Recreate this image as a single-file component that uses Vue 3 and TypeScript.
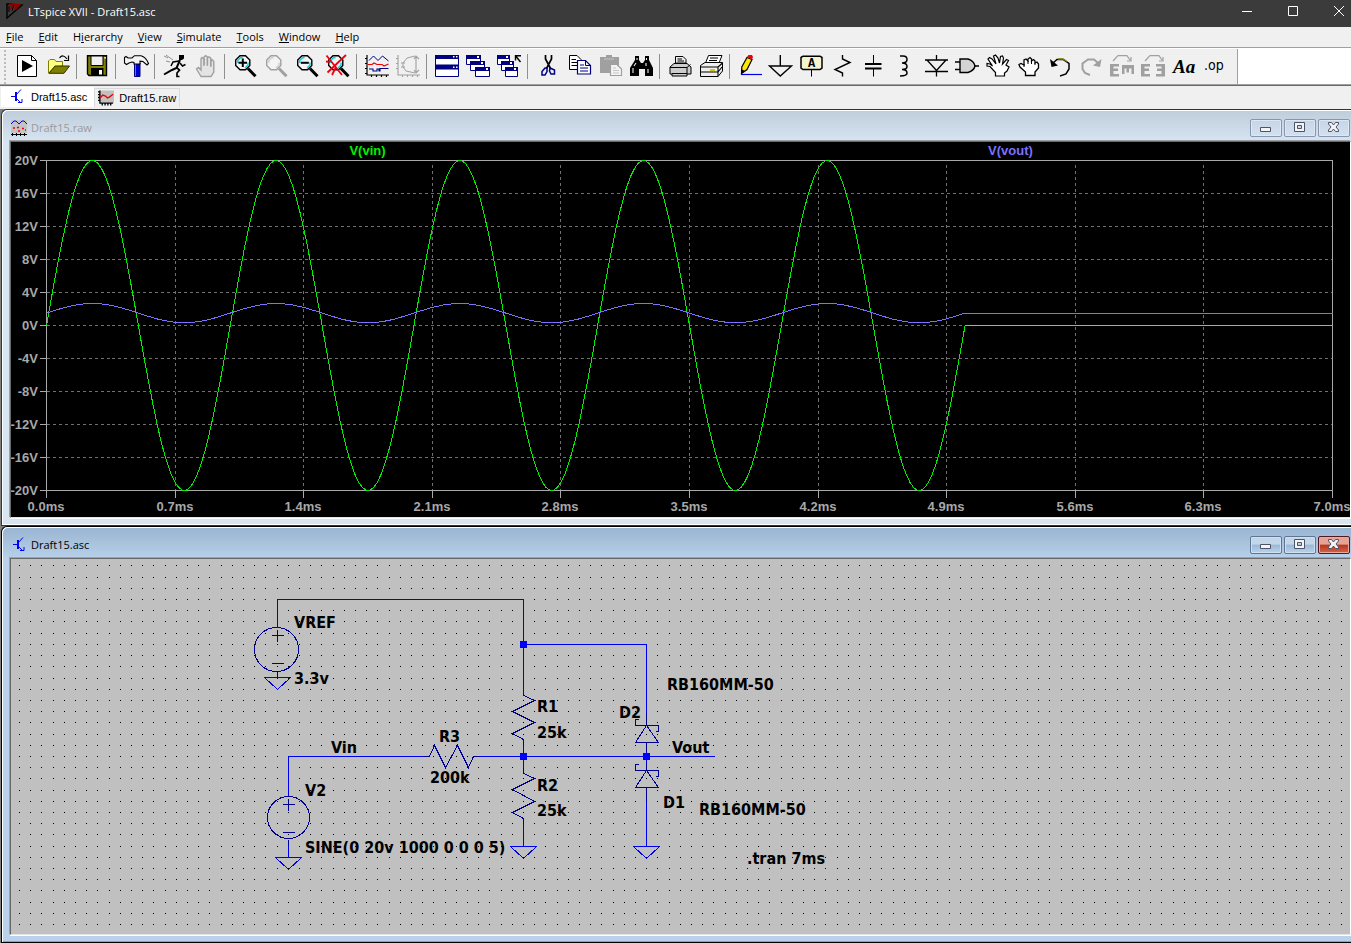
<script setup lang="ts">
import { computed, onBeforeUnmount, onMounted, ref } from 'vue'

interface Shape {
  d: string
  fill?: string
  stroke?: string
  w?: number
}
interface Tool {
  label: string
  shapes: Shape[]
  text?: { value: string; x: number; y: number; kind: string }
}

const K = '#000'
const G = '#a0a0a0'
const NAVY = '#000080'
const line = (d: string, stroke = K, w = 1): Shape => ({ d, stroke, w })
const area = (d: string, fill = K, stroke = 'none', w = 1): Shape => ({ d, fill, stroke, w })

const lens = (c: string, glass: string, mark: Shape[]): Shape[] => [
  area('M6 .8H11.5L15.8 5V10.5L11.5 14.8H6L1.7 10.5V5Z', '#f4f4f4', c, 1.4),
  line('M3.8 8V5.5L6.5 2.8H8.5M14 7.5V10L11 13', glass, 1.5),
  line('M14 13.5L21.5 21.3', c, 3),
  ...mark,
]
const miniWindow = (x: number, y: number, w: number, h: number): Shape[] => [
  area(`M${x + 0.5} ${y + 0.5}h${w - 1}v${h - 1}h${1 - w}z`, '#fff', NAVY),
  area(`M${x} ${y}h${w}v4h${-w}z`, NAVY),
  area(`M${x + w - 4} ${y + 1}h2v2h-2z`, '#fff'),
]

const groups: Tool[][] = [
  [
    {
      label: 'Run',
      shapes: [
        area('M1.5 .5H15.5L20.5 5.5V21.5H1.5Z', '#fff', K),
        line('M15.5 .5V5.5H20.5'),
        area('M6 5V17L17 11Z'),
      ],
    },
    {
      label: 'Open',
      shapes: [
        area('M1.5 18V6L3 4.5H7.5L9 6.5H15.5V11L8 12Z', '#ffff80', '#808000'),
        area('M2 18.3L8 11H22.5L17 18.3Z', '#808000', '#303000'),
        line('M12.5 3Q16-1.5 20 4M21.5 .5V5.5H17', K, 1.2),
      ],
    },
  ],
  [
    {
      label: 'Save',
      shapes: [
        area('M1.5 .8H20.5V20.5H3L1.5 19Z', '#808000', K, 1.4),
        area('M5 1H17V10.5H5Z', '#f0f0f0', K, 1),
        area('M5 13H17.5V20.5H5Z'),
        area('M13 15H16V19.5H13Z', '#fff'),
        area('M18.3 2H19.8V3.5H18.3Z', '#fff'),
      ],
    },
  ],
  [
    {
      label: 'Control Panel',
      shapes: [
        area('M9.5 8H15V21.5H9.5Z', '#0000d0', '#000080'),
        line('M10.5 9V21', '#4080ff', 1),
        area('M-.5 2.5L1 1.5L3 3H7L9.5 .7H16Q21 2 23.5 8.5L22 10L18 6.5L15 6.2V9H9V7.5L7 7L4 8L1.5 9.5L-.5 8Z', '#f4f4f4', K, 1.1),
      ],
    },
  ],
  [
    {
      label: 'Run simulation',
      shapes: [
        area('M15 0H20V3.5L18 5H15Z'),
        line('M16 5L12.5 13L8 15L0 19.5', K, 2),
        line('M15 6L9 7L7 11M16 8L18.5 11L21.5 9.5', K, 1.5),
        line('M12.5 12.5L15.5 15L13 18V21.5H15.5', K, 1.7),
        line('M0 1L4 3M2 0L9 5M2 6L6 7', '#909090'),
      ],
    },
    {
      label: 'Halt',
      shapes: [
        area(
          'M6 21.5L1.5 14L3.5 12.5L6 15V4L7 2.5L9 4V10V2L10.5 .7L12.5 2V10V3L14 1.8L15.8 3V11V6L17.2 4.8L18.8 6.5V17L16 21.5Z',
          '#e4e4e4', G, 1.4,
        ),
        line('M9 4V11M12.3 3V11M15.8 4V12', G, 1.2),
      ],
    },
  ],
  [
    { label: 'Zoom in', shapes: lens(K, '#00d8e8', [line('M8.8 3.5V12M4.5 7.8H13', K, 2)]) },
    { label: 'Pan', shapes: lens(G, '#d0d0d0', []) },
    { label: 'Zoom out', shapes: lens(K, '#00d8e8', [line('M4.8 7.8H12.8', K, 2)]) },
    {
      label: 'Zoom full extents',
      shapes: lens(K, '#00d8e8', [line('M-.5 .5L15 20M19 0L10 8.5L.5 17.5M-1 6.5L3 7M9 12L5 20', '#f00010', 1.8)]),
    },
  ],
  [
    {
      label: 'Autorange',
      shapes: [
        line('M1 0V20H23M-1 3.5H1M-1 8.5H1M-1 13.5H1M-1 18.5H1M5.5 20V22M10.5 20V22M15.5 20V22M20.5 20V22', K, 1.2),
        line('M3 5.5L7.5 1L12 5.5L16.5 1L22.5 6', NAVY),
        line('M2 9.5H6L8 8L11 9.5H16L18 11L22.5 9', '#f00000', 1.2),
        line('M3 14H7V16H11V14H13V16H14V13.5H22.5', NAVY, 1.1),
      ],
    },
    {
      label: 'FFT',
      shapes: [
        line('M1 0V20H23M-1 3.5H1M-1 8.5H1M-1 13.5H1M5.5 20V22M10.5 20V22M15.5 20V22M20.5 20V22M19 1V18M17 4L19 1L22 4M17 15L19 18L22 15', G, 1.1),
        line('M18 1L10 3L6 8V12L9 16L18 18M4 8H8M4 12H8', G),
      ],
    },
  ],
  [
    {
      label: 'Tile windows',
      shapes: [
        area('M-.5 .5H22.5V21.5H-.5Z', '#fff', NAVY),
        area('M-1 0H23V4H-1ZM-1 9.5H23V14.5H-1Z', NAVY),
        area('M17 1H18.5V2.5H17ZM20 1H21.5V2.5H20ZM17 11.5H18.5V13H17ZM20 11.5H21.5V13H20Z', '#fff'),
      ],
    },
    { label: 'Cascade windows', shapes: [...miniWindow(-1, 0, 15, 10), ...miniWindow(3, 6, 15, 10), ...miniWindow(8, 12, 15, 10)] },
    {
      label: 'Close all windows',
      shapes: [
        ...miniWindow(-1, 0, 13, 10),
        ...miniWindow(3, 6, 13, 10),
        ...miniWindow(7, 12, 13, 10),
        line('M17.5 5.5V.7H23M17.5 .7L22.5 7', K, 1.4),
      ],
    },
  ],
  [
    {
      label: 'Cut',
      shapes: [
        line('M8.5 0V4L13.5 13.5M14.5 0V4L9.5 13.5', K, 1.7),
        line('M8 13H10V16.5L8 20H5V16.5ZM13 13L17.5 15V19H14L12.5 16Z', NAVY, 1.5),
      ],
    },
    {
      label: 'Copy',
      shapes: [
        area('M1.5 .5H9L13 4.5V14.5H1.5Z', '#fff', K),
        line('M3.5 4.5H8M3.5 7.5H10M3.5 10.5H9'),
        area('M9.5 5.5H17.5L22.5 10.5V19H9.5Z', '#fff', NAVY, 1.2),
        line('M12 10H16M12 13H20M12 16H20M17.5 5.5V10.5H22.5', NAVY),
      ],
    },
    {
      label: 'Paste',
      shapes: [
        area('M1 2H7V0H13V2H20V18H1Z', G),
        area('M11.5 9.5H18L22.5 14V20.5H11.5Z', '#f4f4f4', G, 1.2),
        line('M14 13H17M14 15.5H20M14 18H20M5 4H15', '#c4c4c4'),
      ],
    },
    {
      label: 'Find',
      shapes: [
        area('M5 1H9V5L11 8H13L15 5V1H19V5L23 13V21H15V14H9V21H0V13L5 5Z'),
        line('M7 3V5M16.5 3V5M3 13V18M6 8L4 11M16 8V11M18 14V18', '#f0f0f0', 1.1),
      ],
    },
  ],
  [
    {
      label: 'Print',
      shapes: [
        area('M6.5 8V1.5H14L17 4.5V8Z', '#eee', K),
        area('M5 8.5H18L22 12V19H18V21H3V19H1V12Z', '#ccc', K),
        line('M1 12.5H18V19M18 12.5L21.5 9.5M3 18.5H18M8.5 4H13M8.5 6H15', K),
      ],
    },
    {
      label: 'Print setup',
      shapes: [
        area('M5.5 8L8.5 .5H22L19 8Z', '#fff', K),
        area('M.5 10.5L5 7.5H22.5V16L18 21.5H.5Z', '#eee', K),
        line('M.5 12H18V21.5M18 12L22.5 8M.5 17H18L22 12M10 3H18M9 5.5H17', K, 1.1),
        line('M10 15H15', '#d0c000', 1.8),
      ],
    },
  ],
  [
    {
      label: 'Wire',
      shapes: [
        area('M2.5 18.5L2.8 12L8 2.5L13 4.5L8 14.5Z', '#ffe800', K, 1.2),
        area('M8 2L9.5 0H13L14 2L13 4.5Z', '#f00000'),
        area('M2 19V14L6 16Z'),
        line('M2 19.5H23', '#0000f0', 1.2),
      ],
    },
    { label: 'Ground', shapes: [line('M10.3 0V11M-.5 11H21.5L10.3 21Z', K, 1.4)] },
    {
      label: 'Label net',
      shapes: [area('M0 2.5L2 1.2H19L21 2.5V13L19 14.5H2L0 13Z', '#f4f4d0', K, 1.5), line('M10.5 15V21.5')],
      text: { value: 'A', x: 7, y: 12, kind: 'net' },
    },
    { label: 'Resistor', shapes: [line('M10.5 0V4L18 7.5L3 14.5L10.5 18V21.5', K, 1.4)] },
    { label: 'Capacitor', shapes: [line('M10.5 0V8.5M10.5 14V21.5'), line('M2 9H18.5M2 13.5H18.5', K, 2)] },
    {
      label: 'Inductor',
      shapes: [line('M6 1H9Q13 1 13 4.5Q13 8 8 8Q13 8 13 11.5Q13 14.5 8 14.5Q13 14.5 13 18Q13 21 6 21', K, 1.5)],
    },
    { label: 'Diode', shapes: [line('M11.5 0V5M11.5 16.5V21.5M0 5H23M2 5L11.5 15.5L21 5M0 16.5H23', K, 1.3)] },
    {
      label: 'Component',
      shapes: [
        area('M4 4H12Q18 6 19 11Q18 15.5 12 17.5H4Z', '#d4d4d4', K, 1.4),
        line('M-1 7H4M-1 14.5H4M18 11H23', K, 1.6),
      ],
    },
    {
      label: 'Move',
      shapes: [
        area(
          'M8.5 21V17.5L3 11.5L0 11V8.5L3 9L5.5 11L1 4L2.5 2.5L5 4L9 9L6.5 1L8.5 0L11 3L12.5 8L13.5 1.5L15.5 1L16.5 3L15.5 9L19.5 4.5L21.5 5.5L19 10L22 12L20 16L17.5 18V21Z',
          '#fff', K, 1.2,
        ),
      ],
    },
    {
      label: 'Drag',
      shapes: [
        area(
          'M7.5 20.5V17L2 12L1 9.5L3 8.5L6 10V5L8 4L10 6V4L12 2.5L13.5 4V6L15.5 4.5L17 6V8L19 7L20.5 9V13L17 17V20.5Z',
          '#fff', K, 1.3,
        ),
        line('M6 9V12M10 6V9M13.5 6V9M17 8V10', K, 1),
      ],
    },
    { label: 'Undo', shapes: [line('M4 8L8 4.5H14L20 8.5V14L17 19L11 21', K, 1.5), line('M9 4H14L18 6.5', '#808000', 1.3), area('M1 4L2.5 12L9 10.5Z')] },
    { label: 'Redo', shapes: [line('M18 8L14 4.5H8L2.5 8.5V14L5 18L10 20', G, 2), area('M21.5 4L20 12L13 10.5Z', G)] },
    {
      label: 'Rotate',
      shapes: [
        area('M-1 9H8V11.5H2.5V13.5H7V16H2.5V19H8V21.5H-1ZM11 10H23V19H20.5V13.5H18V17.5H15.5V13.5H13.5V19H11Z', G),
        line('M2 6L7 .7H16L19 5M20 2V6H16', G, 1.2),
      ],
    },
    {
      label: 'Mirror',
      shapes: [
        area('M-1 9H8V11.5H2.5V13.5H7V16H2.5V19H8V21.5H-1ZM23 9H14V11.5H19.5V13.5H15V16H19.5V19H14V21.5H23Z', G),
        line('M3 6L8 .7H17L20 5M21 2V6H17', G, 1.2),
      ],
    },
    { label: 'Comment', shapes: [], text: { value: 'Aa', x: 0, y: 18, kind: 'comment' } },
    { label: 'SPICE directive', shapes: [], text: { value: '.op', x: 0, y: 15, kind: 'directive' } },
  ],
]

const menus = [
  ['', 'F', 'ile'],
  ['', 'E', 'dit'],
  ['H', 'i', 'erarchy'],
  ['', 'V', 'iew'],
  ['', 'S', 'imulate'],
  ['', 'T', 'ools'],
  ['', 'W', 'indow'],
  ['', 'H', 'elp'],
]

/* Waveform plot */
const plotBox = ref<HTMLElement | null>(null)
const width = ref(1339)
const height = ref(375)
let observer: ResizeObserver | undefined
onMounted(() => {
  observer = new ResizeObserver(([entry]) => {
    width.value = Math.round(entry.contentRect.width)
    height.value = Math.round(entry.contentRect.height)
  })
  if (plotBox.value) observer.observe(plotBox.value)
})
onBeforeUnmount(() => observer?.disconnect())

const left = 35
const top = 18
const right = computed(() => width.value - 18)
const bottom = computed(() => height.value - 27)
const xAt = (ms: number) => left + ((right.value - left) * ms) / 7
const yAt = (volts: number) => top + ((bottom.value - top) * (20 - volts)) / 40

const xTicks = computed(() =>
  Array.from({ length: 11 }, (_, i) => ({ x: Math.round(xAt(i * 0.7)), label: `${(i * 0.7).toFixed(1)}ms` })),
)
const yTicks = computed(() =>
  Array.from({ length: 11 }, (_, i) => ({ y: Math.round(yAt(20 - i * 4)), label: `${20 - i * 4}V` })),
)
const trace = (offset: number, amplitude: number) => {
  const points: string[] = []
  for (let i = 0; i <= 250; i++) {
    const t = i / 50
    points.push(`${xAt(t).toFixed(1)},${yAt(offset + amplitude * Math.sin(2 * Math.PI * t)).toFixed(1)}`)
  }
  return points.join(' ')
}
const vin = computed(() => trace(0, 20))
const vout = computed(() => `${trace(1.5, 1.16)} ${right.value},${yAt(1.5).toFixed(1)}`)

/* Schematic */
const dots = Array.from({ length: 100 }, (_, row) =>
  [0, 11, 22, 34, 45].map((x) => `M${x + 8} ${Math.round(6.4 + row * 11.21)}h1v1h-1z`).join(''),
).join('')

const wires =
  'M277 627V599H523V693M523 644H646V712M288 795V756H423M479 756H714M523 745V767M523 824V846M288 845V857M646 750V763M646 801V846'
const grounds = [
  [277, 677],
  [288, 857],
  [523, 846],
  [646, 846],
]
const nodes = [
  [523, 644],
  [523, 756],
  [646, 756],
]
const symbols = [
  'M277 671V677M271 635H283M277 629V641M271 663H283',
  'M288 839V845M282 804H294M288 798V810M282 832H294',
  'M423 756H429L434 745L445 767L457 745L468 767L473 756H479',
  'M523 693V695L534 700L512 711L534 722L512 733L523 739V745',
  'M523 767V773L534 778L512 789L534 801L512 812L523 818V824',
  'M646 712V725L658 742H635L646 725M638 719H635V725H658V731H655M646 742V750',
  'M646 763V770L658 787H635L646 770M638 764H635V770H658V776H655M646 787V801',
]
const notes: [number, number, string][] = [
  [294, 628, 'VREF'],
  [294, 684, '3.3v'],
  [439, 742, 'R3'],
  [430, 783, '200k'],
  [331, 753, 'Vin'],
  [305, 796, 'V2'],
  [305, 853, 'SINE(0 20v 1000 0 0 0 5)'],
  [537, 712, 'R1'],
  [537, 738, '25k'],
  [537, 791, 'R2'],
  [537, 816, '25k'],
  [667, 690, 'RB160MM-50'],
  [619, 718, 'D2'],
  [672, 753, 'Vout'],
  [663, 808, 'D1'],
  [699, 815, 'RB160MM-50'],
  [747, 864, '.tran 7ms'],
]
const controls = ['Minimize', 'Restore', 'Close']
</script>

<template>
  <div class="app">
    <header class="titlebar">
      <svg class="logo" width="17" height="16" viewBox="0 0 17 16" aria-hidden="true">
        <path d="M1 1L16 2L1 15Z" fill="none" stroke="#000" stroke-width="1.4" />
        <path d="M2 1L15 1L10 7H8L9 3L6 6H4L5 3Z" fill="#8c0000" />
        <path d="M3 3V9M8 2L6 8" stroke="#000" />
      </svg>
      <h1>LTspice XVII - Draft15.asc</h1>
      <div class="sys">
        <button type="button" aria-label="Minimize">
          <svg width="10" height="10"><path d="M0 5.5H10" /></svg>
        </button>
        <button type="button" aria-label="Maximize">
          <svg width="10" height="10"><path d="M.5 .5H9.5V9.5H.5Z" /></svg>
        </button>
        <button type="button" aria-label="Close">
          <svg width="10" height="10"><path d="M0 0L10 10M10 0L0 10" /></svg>
        </button>
      </div>
    </header>

    <nav class="menu">
      <button v-for="m in menus" :key="m.join('')" type="button">{{ m[0] }}<u>{{ m[1] }}</u>{{ m[2] }}</button>
    </nav>

    <div class="toolrow">
      <div class="toolbar" role="toolbar" aria-label="Tools">
        <div v-for="(group, g) in groups" :key="g" class="group">
          <button v-for="tool in group" :key="tool.label" type="button" :aria-label="tool.label">
            <svg width="23" height="23" viewBox="0 0 23 23">
              <path
                v-for="(s, i) in tool.shapes"
                :key="i"
                :d="s.d"
                :fill="s.fill ?? 'none'"
                :stroke="s.stroke ?? 'none'"
                :stroke-width="s.w"
              />
              <text v-if="tool.text" :x="tool.text.x" :y="tool.text.y" :class="tool.text.kind">{{ tool.text.value }}</text>
            </svg>
          </button>
        </div>
      </div>
    </div>

    <div class="tabs" role="tablist">
      <button type="button" role="tab" aria-selected="true" class="tab current">
        <svg width="16" height="16" viewBox="0 0 16 16" fill="none" stroke="#0000f0">
          <path d="M1 7.5H6" /><path d="M6 3V12" stroke-width="2" /><path d="M6 6L11 .5M6 9L11 14M8 13.5H12V10" />
        </svg>
        <span>Draft15.asc</span>
      </button>
      <button type="button" role="tab" aria-selected="false" class="tab">
        <svg width="16" height="16" viewBox="0 0 17 16" fill="none">
          <path d="M2 0H17V13H2Z" fill="#c0c0c0" />
          <path d="M2 0V13.5H16M0 1.5H2M0 4.5H2M0 7.5H2M0 10.5H2M4.5 13V16M7.5 13V16M10.5 13V16M13.5 13V16" stroke="#000" stroke-width="1.4" />
          <path d="M2 8L5 5L8 6L10 8L12 7L16 4" stroke="#f00000" stroke-width="1.5" />
        </svg>
        <span>Draft15.raw</span>
      </button>
    </div>

    <main class="desktop">
      <section class="child">
        <header class="caption">
          <svg width="16" height="16" viewBox="0 0 16 16" fill="none">
            <path d="M0 0H16V13H0Z" fill="#c4c4c4" />
            <path d="M0 4L3 1H5L8 4L11 1H13L16 4" stroke="#0000f0" />
            <path d="M2 8H4M6 7.5H8M11 8.5H13M7 11H9M14 10H15" stroke="#f00000" stroke-width="1.3" />
            <path d="M0 14.5H16M1.5 13V16M5.5 13V16M9.5 13V16M13.5 13V16" stroke="#000" />
          </svg>
          <h2>Draft15.raw</h2>
          <div class="buttons">
            <button v-for="c in controls" :key="c" type="button" :class="c.toLowerCase()" :aria-label="c">
              <svg width="14" height="12" viewBox="1 1 14 12">
                <path v-if="c === 'Minimize'" d="M2.5 6.5H12.5V10.5H2.5Z" />
                <path v-else-if="c === 'Restore'" d="M2.5 1.5H12.5V10.5H2.5ZM5.5 4.5V7.5H9.5V4.5Z" fill-rule="evenodd" />
                <path v-else d="M2.5 1.5H5.5L7.5 4L9.5 1.5H12.5V3L10 6L12.5 9V10.5H9.5L7.5 8L5.5 10.5H2.5V9L5 6L2.5 3Z" />
              </svg>
            </button>
          </div>
        </header>
        <div ref="plotBox" class="client plot">
          <svg width="100%" height="100%">
            <g transform="translate(.5 .5)" shape-rendering="crispEdges" fill="none">
              <g class="grid">
                <path v-for="t in xTicks.slice(1, -1)" :key="t.x" :d="`M${t.x} ${top + 4}V${bottom}`" />
                <path v-for="t in yTicks.slice(1, -1)" :key="t.y" :d="`M${left} ${t.y}H${right}`" />
              </g>
              <g class="axis">
                <path :d="`M${left} ${top}H${right}V${bottom}H${left}Z`" />
                <path v-for="t in xTicks" :key="t.x" :d="`M${t.x} ${bottom}v7`" />
                <path v-for="t in yTicks" :key="t.y" :d="`M${left} ${t.y}h-7`" />
                <path :d="`M${xAt(5)} ${yAt(0)}H${right}`" />
              </g>
              <polyline class="vin" :points="vin" />
              <polyline class="vout" :points="vout" />
            </g>
            <text v-for="t in yTicks" :key="t.label" x="27" :y="t.y + 5" text-anchor="end">{{ t.label }}</text>
            <text v-for="t in xTicks" :key="t.label" :x="t.x" :y="bottom + 21" text-anchor="middle">{{ t.label }}</text>
            <text class="name-vin" :x="left + (right - left) / 4" y="13" text-anchor="middle">V(vin)</text>
            <text class="name-vout" :x="left + ((right - left) * 3) / 4" y="13" text-anchor="middle">V(vout)</text>
          </svg>
        </div>
      </section>

      <section class="child active">
        <header class="caption">
          <svg width="16" height="16" viewBox="0 0 16 16" fill="none" stroke="#0000f0">
            <path d="M2 7.5H7" /><path d="M7 3V12" stroke-width="2" /><path d="M7 6L12 .5M7 9L12 14M9 13.5H13V10" />
          </svg>
          <h2>Draft15.asc</h2>
          <div class="buttons">
            <button v-for="c in controls" :key="c" type="button" :class="c.toLowerCase()" :aria-label="c">
              <svg width="14" height="12" viewBox="1 1 14 12">
                <path v-if="c === 'Minimize'" d="M2.5 6.5H12.5V10.5H2.5Z" />
                <path v-else-if="c === 'Restore'" d="M2.5 1.5H12.5V10.5H2.5ZM5.5 4.5V7.5H9.5V4.5Z" fill-rule="evenodd" />
                <path v-else d="M2.5 1.5H5.5L7.5 4L9.5 1.5H12.5V3L10 6L12.5 9V10.5H9.5L7.5 8L5.5 10.5H2.5V9L5 6L2.5 3Z" />
              </svg>
            </button>
          </div>
        </header>
        <div class="client sheet">
          <svg width="100%" height="100%">
            <defs>
              <pattern id="dots" width="56" height="1121" patternUnits="userSpaceOnUse">
                <path :d="dots" fill="#000" shape-rendering="crispEdges" />
              </pattern>
            </defs>
            <rect width="100%" height="100%" fill="url(#dots)" />
            <g transform="translate(-11 -559)">
              <g transform="translate(.5 .5)" fill="none" shape-rendering="crispEdges">
                <g class="symbol">
                  <circle cx="276" cy="649" r="22" />
                  <circle cx="288" cy="817" r="21" />
                  <path v-for="d in symbols" :key="d" :d="d" />
                </g>
                <g class="wire">
                  <path :d="wires" />
                  <path v-for="[x, y] in grounds" :key="`${x}-${y}`" :d="`M${x - 13} ${y}h26l-13 12z`" />
                </g>
                <path v-for="[x, y] in nodes" :key="`${x}-${y}`" class="node" :d="`M${x - 3.5} ${y - 3.5}h7v7h-7z`" />
              </g>
              <text v-for="[x, y, value] in notes" :key="`${x}-${y}`" :x="x" :y="y">{{ value }}</text>
            </g>
          </svg>
        </div>
      </section>
    </main>
  </div>
</template>

<style>
body {
  margin: 0;
  overflow: hidden;
}
</style>

<style scoped>
.app {
  display: flex;
  flex-direction: column;
  height: 100vh;
  background: #f0f0f0;
  color: #000;
  font: 11px/16px 'Open Sans', 'Noto Sans', sans-serif;
}
button {
  margin: 0;
  padding: 0;
  border: 0;
  background: none;
  color: inherit;
  font: inherit;
}
svg {
  display: block;
  overflow: visible;
}
h1,
h2 {
  margin: 0;
  font: inherit;
}
.titlebar {
  display: flex;
  align-items: center;
  flex: none;
  height: 27px;
  padding-left: 6px;
  background: #3b3b3b;
  color: #fff;
}
.titlebar h1 {
  flex: 1;
  margin: 0 0 4px 5px;
}
.logo {
  margin-bottom: 5px;
}
.sys {
  display: flex;
  gap: 22px;
  margin-bottom: 5px;
}
.sys button {
  display: grid;
  place-items: center;
  width: 24px;
  height: 22px;
}
.sys path {
  fill: none;
  stroke: #fff;
}
.menu {
  display: flex;
  flex: none;
  gap: 15px;
  height: 20px;
  padding-left: 6px;
}
.toolrow {
  display: flex;
  flex: none;
  height: 35px;
  border-top: 1px solid #a0a0a0;
  border-bottom: 1px solid #696969;
  background: #fff;
  box-shadow: inset 0 1px #fff, inset 0 -1px #a0a0a0;
  padding: 1px 0;
}
.toolbar {
  display: flex;
  align-items: center;
  padding: 0 6px 0 12px;
  border-right: 1px solid #a0a0a0;
  background: radial-gradient(circle, #bbb 1px, transparent 1px) 3px 4px / 4px 4px repeat-y, #f0f0f0;
}
.group {
  display: flex;
}
.group + .group {
  margin-left: 2px;
  padding-left: 5px;
  border-left: 1px solid #909090;
}
.group button {
  display: grid;
  place-items: center;
  width: 31px;
  height: 25px;
}
.net {
  font: bold 12px 'Liberation Mono', monospace;
}
.comment {
  font: italic bold 19px 'Liberation Serif', serif;
}
.directive {
  font: 14px 'DejaVu Sans Condensed', 'DejaVu Sans', sans-serif;
}
.tabs {
  display: flex;
  flex: none;
  align-items: flex-start;
  height: 21px;
  padding: 1px 0 1px 1px;
  font: 11px/16px 'Liberation Sans', sans-serif;
}
.tab {
  display: flex;
  align-items: center;
  gap: 5px;
  height: 19px;
  margin-top: 1px;
  padding: 0 3px;
  border: 1px solid #d9d9d9;
  border-bottom: 0;
}
.tab.current {
  height: 20px;
  margin-top: 0;
  padding: 0 7px 0 9px;
  border: 0;
  background: #fff;
}
.desktop {
  display: flex;
  flex: 1;
  flex-direction: column;
  min-height: 0;
  padding-left: 1px;
  background: #808080;
}
.child {
  display: flex;
  flex: 1;
  flex-direction: column;
  min-height: 0;
  box-sizing: border-box;
  padding: 1px 0 7px 1px;
  border: solid #303438;
  border-width: 1px 0 1px 1px;
  border-radius: 6px 0 0 0;
  background: linear-gradient(#bfcddb, #d7e4f2 32px);
  box-shadow: inset 1px 1px #fff, inset 0 -1px #fff;
}
.child.active {
  background: linear-gradient(#99b4d1, #b9d1ea 32px);
  border-color: #000;
  box-shadow: inset 1px 1px #fff, inset 0 -1px #35c8dd;
}
.caption {
  display: flex;
  align-items: center;
  flex: none;
  height: 29px;
  padding: 0 1px 0 8px;
}
.caption h2 {
  flex: 1;
  margin: 5px 0 0 4px;
  color: #9a9a9a;
}
.caption > svg {
  margin-top: 5px;
}
.active .caption h2 {
  color: #000;
}
.buttons {
  display: flex;
  gap: 2px;
  margin-top: 4px;
}
.buttons button {
  display: grid;
  place-items: center;
  box-sizing: border-box;
  width: 32px;
  height: 18px;
  border: 1px solid #8496b0;
  border-radius: 2px;
  background: linear-gradient(#c6d5e6, #d3e0ee);
  box-shadow: inset 0 0 0 1px #dce8f4;
}
.buttons path {
  fill: #f4f4f4;
  stroke: #4d5368;
}
.active .buttons button {
  border-color: #5f7693;
  background: linear-gradient(#c3d6ea 45%, #9ab8d8 50%, #b8d3ea);
  box-shadow: inset 0 0 0 1px #cfe0f0;
}
.active .buttons .close {
  border-color: #501820;
  background: linear-gradient(#e5a398 45%, #b8351e 50%, #d0654c);
  box-shadow: inset 0 0 0 1px #e8a89c;
}
.client {
  flex: 1;
  min-height: 0;
  margin: 1px 0 0 7px;
  border: 1px solid #696969;
  border-right-color: #fff;
  border-bottom-color: #e3e3e3;
  box-shadow: -1px -1px #a0a0a0, 0 1px #fff;
}
.client > svg {
  overflow: hidden;
}
.plot {
  background: #000;
}
.plot text {
  fill: #a8a8a8;
  font: bold 13px 'Liberation Sans', Arial, sans-serif;
}
.plot .name-vin {
  fill: #00f000;
}
.plot .name-vout {
  fill: #7c70ff;
}
.grid {
  stroke: #707070;
  stroke-dasharray: 3 3;
}
.axis {
  stroke: #a8a8a8;
}
.vin {
  stroke: #00f000;
}
.vout {
  stroke: #7c70ff;
}
.sheet {
  background: #c0c0c0;
}
.sheet text {
  font: bold 16px 'DejaVu Sans Condensed', 'DejaVu Sans', sans-serif;
}
.symbol {
  stroke: #000090;
}
.wire {
  stroke: #0000f0;
}
.node {
  fill: #0000f8;
}
</style>
